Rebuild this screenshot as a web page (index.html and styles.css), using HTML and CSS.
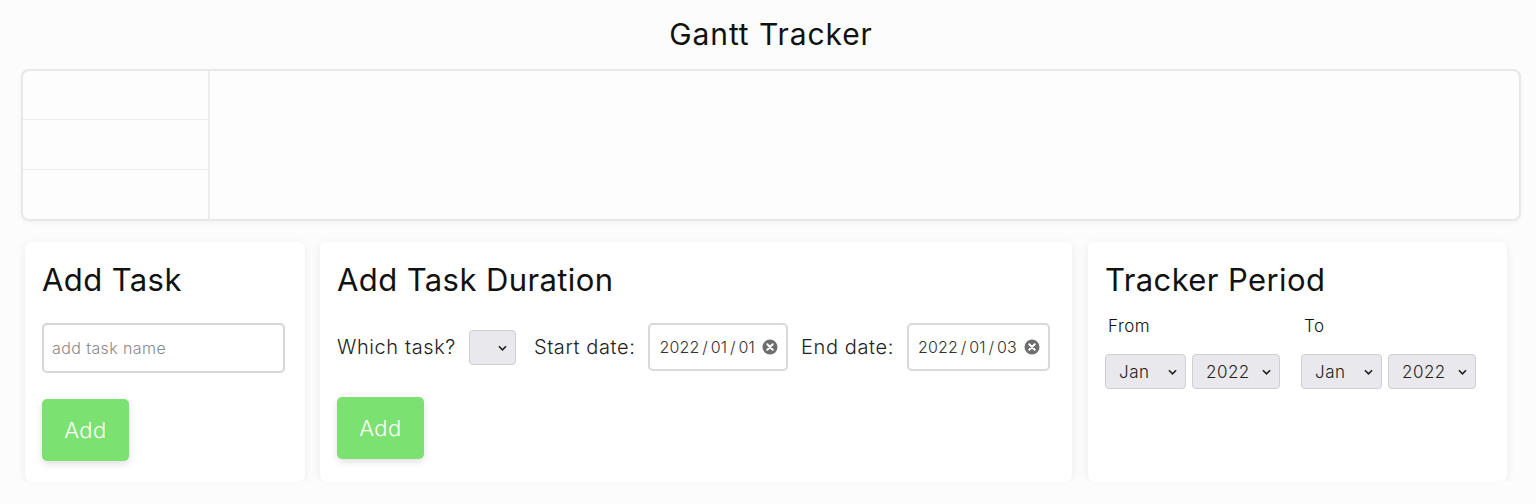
FILE: index.html
```html
<!DOCTYPE html>
<html lang="en">
<head>
    <meta charset="UTF-8">
    <meta name="viewport" content="width=device-width, initial-scale=1.0">
    <title>Gantt Tracker</title>
    <link rel="stylesheet" href="styles.css">
</head>

<body>
    <h1 class="title">Gantt Tracker</h1>

    <div class="gantt">
        <div class="task-names">
            <div class="task-cell"></div>
            <div class="task-cell"></div>
            <div class="task-cell"></div>
        </div>
        <div class="task-bars"></div>
    </div>

    <div class="forms">
        <div class="card card-task">
            <h2>Add Task</h2>
            <input class="text-input" type="text" placeholder="add task name">
            <div>
                <button class="add-btn">Add</button>
            </div>
        </div>

        <div class="card card-duration">
            <h2>Add Task Duration</h2>
            <div class="duration-row">
                <span class="label">Which task?</span>
                <span class="select small-select">
                    <select></select>
                    <svg class="chevron" viewBox="0 0 10 6"><path d="M1 1l4 4 4-4" /></svg>
                </span>
                <span class="label">Start date:</span>
                <span class="date-box">
                    <span class="date-text">2022 / 01 / 01</span>
                    <svg class="clear" viewBox="0 0 16 16"><circle cx="8" cy="8" r="7.5" /><path d="M5.3 5.3l5.4 5.4M10.7 5.3l-5.4 5.4" /></svg>
                </span>
                <span class="label">End date:</span>
                <span class="date-box">
                    <span class="date-text">2022 / 01 / 03</span>
                    <svg class="clear" viewBox="0 0 16 16"><circle cx="8" cy="8" r="7.5" /><path d="M5.3 5.3l5.4 5.4M10.7 5.3l-5.4 5.4" /></svg>
                </span>
            </div>
            <div>
                <button class="add-btn">Add</button>
            </div>
        </div>

        <div class="card card-period">
            <h2>Tracker Period</h2>
            <div class="period">
                <div class="period-col">
                    <span class="period-label">From</span>
                    <div class="period-selects">
                        <span class="select month-select">
                            <select><option>Jan</option></select>
                            <svg class="chevron" viewBox="0 0 10 6"><path d="M1 1l4 4 4-4" /></svg>
                        </span>
                        <span class="select year-select">
                            <select><option>2022</option></select>
                            <svg class="chevron" viewBox="0 0 10 6"><path d="M1 1l4 4 4-4" /></svg>
                        </span>
                    </div>
                </div>
                <div class="period-col">
                    <span class="period-label">To</span>
                    <div class="period-selects">
                        <span class="select month-select">
                            <select><option>Jan</option></select>
                            <svg class="chevron" viewBox="0 0 10 6"><path d="M1 1l4 4 4-4" /></svg>
                        </span>
                        <span class="select year-select">
                            <select><option>2022</option></select>
                            <svg class="chevron" viewBox="0 0 10 6"><path d="M1 1l4 4 4-4" /></svg>
                        </span>
                    </div>
                </div>
            </div>
        </div>
    </div>
</body>
</html>
```

FILE: styles.css
```css
body {
    margin: 0;
    padding: 0;
    background-color: #fcfcfc;
    font-family: "Inter", "Open Sans", sans-serif;
    font-weight: 300;
    color: #111;
}

.title {
    margin: 0;
    height: 69px;
    display: flex;
    justify-content: center;
    align-items: center;
    font-size: 30px;
    font-weight: 400;
    letter-spacing: 0.9px;
    padding: 0 0 2px 6px;
    box-sizing: border-box;
}

.gantt {
    margin: 0 15px 0 21px;
    height: 152px;
    box-sizing: border-box;
    border: 2px solid #e8e8e8;
    border-radius: 8px;
    display: flex;
    background-color: #fdfdfd;
    box-shadow: 0 2px 4px rgba(0, 0, 0, 0.04);
}

.task-names {
    width: 185px;
    border-right: 2px solid #ececec;
    display: flex;
    flex-direction: column;
}

.task-cell {
    height: 50px;
    box-sizing: border-box;
    border-bottom: 1px solid #ececec;
}

.task-cell:last-child {
    border-bottom: none;
}

.task-bars {
    flex: 1;
}

/* cards under the chart */
.forms {
    display: flex;
    padding: 21px 0 0 25px;
    gap: 15px;
}

.card {
    background-color: #fff;
    border-radius: 6px;
    box-shadow: 0 2px 10px rgba(0, 0, 0, 0.07);
    height: 239px;
    box-sizing: border-box;
    padding: 0 17px;
    flex-shrink: 0;
}

.card h2 {
    margin: 0;
    padding-top: 19px;
    height: 70px;
    box-sizing: border-box;
    font-size: 31px;
    font-weight: 400;
    letter-spacing: 0.4px;
}

.card-task {
    width: 280px;
}

.card-duration {
    width: 752px;
}

.card-period {
    width: 419px;
    margin-left: 1px;
}

.text-input {
    display: block;
    width: 243px;
    height: 50px;
    margin-top: 11px;
    box-sizing: border-box;
    border: 2px solid #d6d6d6;
    border-radius: 5px;
    padding: 0 8px;
    font-family: inherit;
    font-size: 16px;
    font-weight: 300;
    letter-spacing: 0.4px;
}

.text-input::placeholder {
    color: #8a8a8a;
}

.add-btn {
    width: 87px;
    height: 62px;
    border: none;
    border-radius: 5px;
    background-color: #7be171;
    color: #fff;
    font-family: inherit;
    font-size: 22px;
    font-weight: 300;
    letter-spacing: 0.5px;
    box-shadow: 0 3px 7px rgba(0, 0, 0, 0.12);
    cursor: pointer;
}

.card-task .add-btn {
    margin-top: 26px;
}

.card-duration .add-btn {
    margin-top: 26px;
}

.duration-row {
    display: flex;
    align-items: center;
    height: 48px;
    margin-top: 11px;
    white-space: nowrap;
}

.duration-row > * {
    flex-shrink: 0;
}

.label {
    font-size: 20px;
    font-weight: 300;
    letter-spacing: 0.6px;
    color: #222;
    margin-right: 13px;
}

.select {
    position: relative;
    display: inline-block;
}

.select select {
    appearance: none;
    -webkit-appearance: none;
    display: block;
    height: 35px;
    box-sizing: border-box;
    border: 1px solid #cfcfd4;
    border-radius: 4px;
    background-color: #e9e9ed;
    font-family: inherit;
    font-size: 17px;
    font-weight: 300;
    letter-spacing: 0.5px;
    color: #222;
    padding: 0 0 0 26px;
}

.chevron {
    position: absolute;
    top: 15px;
    right: 9px;
    width: 9px;
    height: 6px;
    fill: none;
    stroke: #222;
    stroke-width: 1.8;
    pointer-events: none;
}

.small-select {
    margin-right: 18px;
}

.small-select select {
    width: 47px;
}

.date-box {
    display: inline-flex;
    align-items: center;
    height: 48px;
    box-sizing: border-box;
    border: 2px solid #d9d9d9;
    border-radius: 5px;
    padding: 0 8px 0 9px;
    margin-right: 13px;
}

.date-text {
    font-size: 16px;
    font-weight: 300;
    color: #333;
    word-spacing: -2px;
    letter-spacing: 0.2px;
}

.clear {
    width: 16px;
    height: 16px;
    margin-left: 7px;
}

.clear circle {
    fill: #6e6e6e;
}

.clear path {
    stroke: #fff;
    stroke-width: 2;
    stroke-linecap: round;
}

.period {
    display: flex;
    gap: 21px;
}

.period-col {
    display: flex;
    flex-direction: column;
}

.period-label {
    font-size: 17px;
    font-weight: 300;
    letter-spacing: 0.5px;
    padding-left: 3px;
    height: 32px;
    line-height: 28px;
}

.period-selects {
    display: flex;
    gap: 6px;
    margin-top: 10px;
}

.period-selects select {
    padding-left: 13px;
}

.month-select select {
    width: 81px;
}

.year-select select {
    width: 88px;
}
```
